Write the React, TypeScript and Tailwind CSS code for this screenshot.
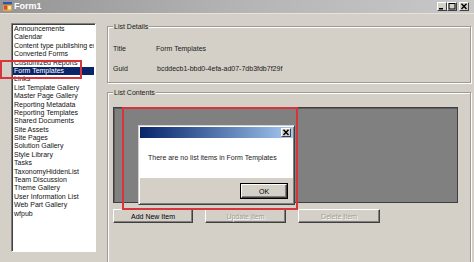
const lists = [
  'Announcements',
  'Calendar',
  'Content type publishing error log',
  'Converted Forms',
  'Customized Reports',
  'Form Templates',
  'Links',
  'List Template Gallery',
  'Master Page Gallery',
  'Reporting Metadata',
  'Reporting Templates',
  'Shared Documents',
  'Site Assets',
  'Site Pages',
  'Solution Gallery',
  'Style Library',
  'Tasks',
  'TaxonomyHiddenList',
  'Team Discussion',
  'Theme Gallery',
  'User Information List',
  'Web Part Gallery',
  'wfpub',
]

function CaptionButton({ kind }: { kind: 'min' | 'max' | 'close' }) {
  return (
    <div className="w-[10px] h-[9px] bg-[#d4d0c8] border border-t-white border-l-white border-b-[#404040] border-r-[#404040] flex items-center justify-center">
      <svg width="8" height="7" viewBox="0 0 8 7">
        {kind === 'min' && <rect x="1" y="5" width="4" height="1.5" fill="#000" />}
        {kind === 'max' && (
          <rect x="1" y="0.5" width="6" height="5.5" fill="none" stroke="#000" strokeWidth="1" />
        )}
        {kind === 'close' && (
          <path d="M1.5 0.8 L6.5 6 M6.5 0.8 L1.5 6" stroke="#000" strokeWidth="1.4" />
        )}
      </svg>
    </div>
  )
}

function Button({ label, width, disabled }: { label: string; width: string; disabled?: boolean }) {
  return (
    <div
      className={`${width} h-[14px] bg-[#d4d0c8] border border-t-white border-l-white border-b-[#404040] border-r-[#404040] shadow-[inset_-1px_-1px_0_#808080] flex items-center justify-center leading-none ${
        disabled ? 'text-[#a09c94] [text-shadow:1px_1px_0_#fff]' : 'text-black'
      }`}
    >
      {label}
    </div>
  )
}

function GroupBox({ label, className, children }: { label: string; className: string; children?: React.ReactNode }) {
  return (
    <div className={`relative border border-[#9d9a93] shadow-[inset_1px_1px_0_#fff,1px_1px_0_#fff] ${className}`}>
      <span className="absolute left-[5px] -top-[5px] px-[1px] bg-[#d4d0c8] leading-[9px] text-[#1a1a1a]">
        {label}
      </span>
      {children}
    </div>
  )
}

export default function App() {
  return (
    <div
      className="relative w-[474px] h-[262px] overflow-hidden bg-[#d4d0c8] text-[7px] text-black"
      style={{ fontFamily: '"Liberation Sans", Arial, sans-serif' }}
    >
      {/* Title bar */}
      <div className="h-[14px] flex items-center bg-gradient-to-r from-[#959595] via-[#b4b4b4] to-[#c8c8c8] pl-[3px] pr-[5px] border-b border-[#e6e3dc]">
        <svg width="9" height="9" viewBox="0 0 9 9" className="shrink-0">
          <rect x="0" y="0" width="9" height="9" fill="#e8a23a" />
          <rect x="0" y="0" width="9" height="2.5" fill="#2a55b8" />
          <rect x="1" y="3.5" width="3" height="4" fill="#d94a2a" />
          <rect x="5" y="4" width="3" height="3.5" fill="#f4e6b0" />
        </svg>
        <span className="ml-[2px] text-[9px] font-bold text-white leading-none">Form1</span>
        <div className="ml-auto flex items-center">
          <CaptionButton kind="min" />
          <CaptionButton kind="max" />
          <div className="w-[2px]" />
          <CaptionButton kind="close" />
        </div>
      </div>

      {/* Body */}
      <div className="flex pl-[11px] pt-[9px]">
        {/* List box */}
        <div className="w-[85px] h-[229px] shrink-0 bg-white border border-t-[#808080] border-l-[#808080] border-b-white border-r-white shadow-[inset_1px_1px_0_#404040] overflow-hidden pl-[1px] pr-[1px] pt-[1px]">
          {lists.map((name) => (
            <div
              key={name}
              className={`h-[8.4px] leading-[8.4px] whitespace-nowrap overflow-hidden pl-[1px] ${
                name === 'Form Templates' ? 'bg-[#0a246a] text-white' : 'text-[#111]'
              }`}
            >
              {name}
            </div>
          ))}
        </div>

        {/* Right side */}
        <div className="ml-[11px] w-[364px] flex flex-col">
          <GroupBox label="List Details" className="mt-[3px] h-[57px]">
            <div className="grid grid-cols-[43px_1fr] gap-y-[12px] pl-[5px] pt-[18px] leading-[8px] text-[#1a1a1a]">
              <span>Title</span>
              <span>Form Templates</span>
              <span>Guid</span>
              <span className="pl-[1px]">bcddecb1-bbd0-4efa-ad07-7db3fdb7f29f</span>
            </div>
          </GroupBox>

          <GroupBox label="List Contents" className="mt-[9px] h-[200px]">
            <div className="pl-[5px] pt-[14px]">
              <div className="w-[345px] h-[96px] bg-[#808080] border border-[#404040] shadow-[inset_1px_1px_0_#5e5e5e]" />
              <div className="flex gap-[12px] mt-[6px]">
                <Button label="Add New Item" width="w-[80px]" />
                <Button label="Update Item" width="w-[81px]" disabled />
                <Button label="Delete Item" width="w-[82px]" disabled />
              </div>
            </div>
          </GroupBox>
        </div>
      </div>

      {/* Message box */}
      <div className="absolute left-[138px] top-[125px] w-[157px] h-[80px] bg-[#d4d0c8] border border-t-[#d4d0c8] border-l-[#d4d0c8] border-b-[#404040] border-r-[#404040] shadow-[inset_1px_1px_0_#fff,inset_-1px_-1px_0_#808080] p-[1px] flex flex-col">
        <div className="h-[11px] shrink-0 bg-gradient-to-r from-[#0a246a] to-[#a6caf0] flex items-center justify-end pr-[2px]">
          <CaptionButton kind="close" />
        </div>
        <div className="h-[40px] shrink-0 bg-white flex items-center pl-[8px] text-[#1a1a1a]">
          There are no list items in Form Templates
        </div>
        <div className="flex-1 flex justify-end items-start pt-[5px] pr-[5px]">
          <div className="border border-black">
            <Button label="OK" width="w-[46px]" />
          </div>
        </div>
      </div>

      {/* Red highlight boxes */}
      <div className="absolute left-0 top-[60px] w-[82px] h-[19px] border-2 border-[#d8343c] pointer-events-none" />
      <div className="absolute left-[122px] top-[107px] w-[176px] h-[103px] border-2 border-[#d8343c] pointer-events-none" />
    </div>
  )
}
